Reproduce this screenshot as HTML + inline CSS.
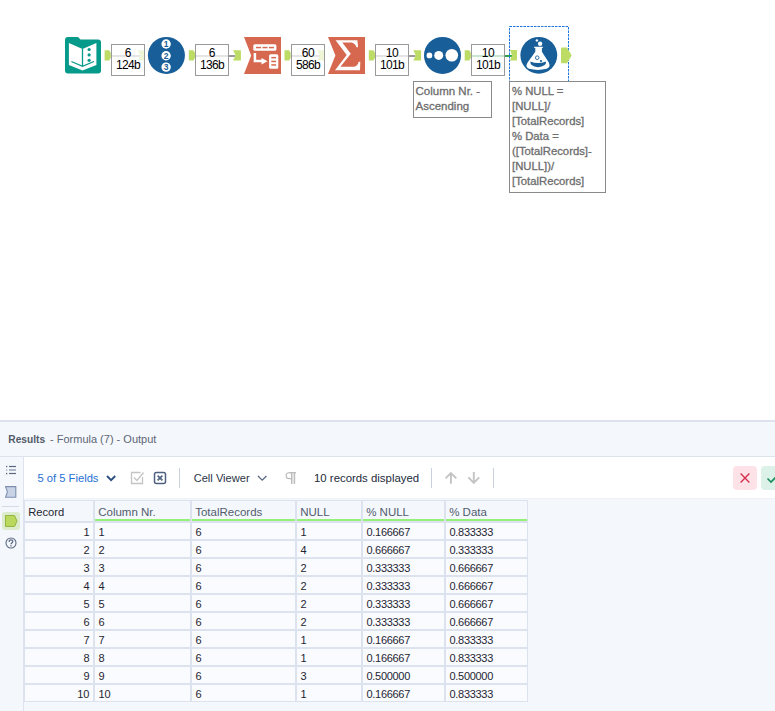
<!DOCTYPE html>
<html><head><meta charset="utf-8"><title>Results</title>
<style>
html,body{margin:0;padding:0;background:#fff;width:775px;height:711px;overflow:hidden;}
svg{display:block;position:absolute;left:0;top:0;}
text{font-family:"Liberation Sans",sans-serif;}
</style></head><body>
<svg width="775" height="711" viewBox="0 0 775 711">
<rect x="111" y="55" width="29" height="2" fill="#9b9b9b"/>
<rect x="195" y="55" width="40.5" height="2" fill="#9b9b9b"/>
<rect x="291" y="55" width="29" height="2" fill="#9b9b9b"/>
<rect x="375" y="55" width="40.5" height="2" fill="#9b9b9b"/>
<rect x="471" y="55" width="41" height="2" fill="#2fa24a"/>
<path d="M65,40 Q65,37 68,37 H78 L80.5,39.5 H98 Q101,39.5 101,42.5 V70.5 Q101,73.5 98,73.5 H68 Q65,73.5 65,70.5 Z" fill="#069a8a"/>
<path d="M68.9,42.9 L82.5,48.9 L96.4,42.9 V65 L82.5,70.6 L68.9,65 Z" fill="#fff"/>
<path d="M82.5,48.9 V66.2" stroke="#069a8a" stroke-width="1.3"/>
<path d="M71.4,61.5 L82.5,66.4 L93.9,61.5" stroke="#069a8a" stroke-width="1.3" fill="none"/>
<circle cx="89.1" cy="49.5" r="1.6" fill="#069a8a"/>
<circle cx="89.1" cy="54.9" r="1.6" fill="#069a8a"/>
<circle cx="89.1" cy="60.3" r="1.6" fill="#069a8a"/>
<path d="M104.6,50.2 H109.2 L110.8,53.0 V57.800000000000004 L109.2,60.6 H104.6 Z" fill="#bddc65" opacity="1.0"/>
<circle cx="166.4" cy="55.4" r="18.5" fill="#185e98"/>
<circle cx="166.1" cy="44.0" r="4.7" fill="#fff"/>
<text x="166.1" y="47.0" font-family="Liberation Sans" font-size="8.5" font-weight="bold" text-anchor="middle" fill="#185e98">1</text>
<circle cx="166.1" cy="55.7" r="4.7" fill="#fff"/>
<text x="166.1" y="58.7" font-family="Liberation Sans" font-size="8.5" font-weight="bold" text-anchor="middle" fill="#185e98">2</text>
<circle cx="166.1" cy="67.1" r="4.7" fill="#fff"/>
<text x="166.1" y="70.1" font-family="Liberation Sans" font-size="8.5" font-weight="bold" text-anchor="middle" fill="#185e98">3</text>
<path d="M137.7,50.2 H144.7 V60.6 H137.7 L140.2,55.400000000000006 Z" fill="#bddc65" opacity="1.0"/>
<path d="M188.8,50.2 H193.4 L195.0,53.0 V57.800000000000004 L193.4,60.6 H188.8 Z" fill="#bddc65" opacity="1.0"/>
<path d="M244,37 H281 V74 H244 L251.2,55.5 Z" fill="#d6684f"/>
<rect x="253.3" y="44.3" width="23.1" height="6.4" rx="1.5" fill="#fff"/>
<rect x="256" y="46.8" width="5" height="1.5" fill="#d6684f"/>
<rect x="262.5" y="46.8" width="5" height="1.5" fill="#d6684f"/>
<rect x="269" y="46.8" width="5" height="1.5" fill="#d6684f"/>
<path d="M254.9,52.9 V61.1 H262.5" stroke="#fff" stroke-width="2.5" fill="none"/>
<path d="M261.5,57.9 L267.5,61.2 L261.5,64.6 Z" fill="#fff"/>
<rect x="269.1" y="54.2" width="9.2" height="14.5" rx="1.5" fill="#fff"/>
<rect x="271.3" y="56.9" width="4.8" height="1.5" fill="#d6684f"/>
<rect x="271.3" y="60.7" width="4.8" height="1.5" fill="#d6684f"/>
<rect x="271.3" y="64.2" width="4.8" height="1.5" fill="#d6684f"/>
<path d="M233.1,50.2 H240.9 V60.6 H233.1 L235.6,55.400000000000006 Z" fill="#bddc65" opacity="1.0"/>
<path d="M284.5,50.2 H289.09999999999997 L290.7,53.0 V57.800000000000004 L289.09999999999997,60.6 H284.5 Z" fill="#bddc65" opacity="1.0"/>
<path d="M328,37 H365 V74 H328 L335.4,55.5 Z" fill="#d6684f"/>
<path d="M335.6,40.2 L357.4,40.2 L358.1,47.2 L356.5,47.2 Q355.5,43.6 351.7,42.4 L342.3,42.4 L350.8,53.8 L340.4,66.7 L354.0,66.7 Q357.6,66 358.7,61.7 L360.3,61.7 L360.0,70.3 L335.0,70.3 L346.7,54.9 Z" fill="#fff"/>
<path d="M317.4,50.2 H324.4 V60.6 H317.4 L319.9,55.400000000000006 Z" fill="#bddc65" opacity="1.0"/>
<path d="M368.8,50.2 H373.4 L375.0,53.0 V57.800000000000004 L373.4,60.6 H368.8 Z" fill="#bddc65" opacity="1.0"/>
<circle cx="442.5" cy="55.4" r="18.5" fill="#185e98"/>
<circle cx="429.4" cy="55.4" r="2.85" fill="#fff"/>
<circle cx="438.7" cy="55.4" r="4.5" fill="#fff"/>
<circle cx="451.8" cy="55.2" r="6.3" fill="#fff"/>
<path d="M413.3,50.2 H421.1 V60.6 H413.3 L415.8,55.400000000000006 Z" fill="#bddc65" opacity="1.0"/>
<path d="M464.7,50.2 H469.29999999999995 L470.9,53.0 V57.800000000000004 L469.29999999999995,60.6 H464.7 Z" fill="#bddc65" opacity="1.0"/>
<rect x="111.5" y="44.5" width="33" height="31" fill="#ffffff" fill-opacity="0.74" stroke="#9a9a9a" stroke-width="1"/>
<text x="128" y="57" font-family="Liberation Sans" font-size="12" text-anchor="middle" fill="#000" letter-spacing="-0.4">6</text>
<text x="128" y="69" font-family="Liberation Sans" font-size="12" text-anchor="middle" fill="#000" letter-spacing="-0.7">124b</text>
<rect x="195.5" y="44.5" width="33" height="31" fill="#ffffff" fill-opacity="0.74" stroke="#9a9a9a" stroke-width="1"/>
<text x="212" y="57" font-family="Liberation Sans" font-size="12" text-anchor="middle" fill="#000" letter-spacing="-0.4">6</text>
<text x="212" y="69" font-family="Liberation Sans" font-size="12" text-anchor="middle" fill="#000" letter-spacing="-0.7">136b</text>
<rect x="291.5" y="44.5" width="33" height="31" fill="#ffffff" fill-opacity="0.74" stroke="#9a9a9a" stroke-width="1"/>
<text x="308" y="57" font-family="Liberation Sans" font-size="12" text-anchor="middle" fill="#000" letter-spacing="-0.4">60</text>
<text x="308" y="69" font-family="Liberation Sans" font-size="12" text-anchor="middle" fill="#000" letter-spacing="-0.7">586b</text>
<rect x="375.5" y="44.5" width="33" height="31" fill="#ffffff" fill-opacity="0.74" stroke="#9a9a9a" stroke-width="1"/>
<text x="392" y="57" font-family="Liberation Sans" font-size="12" text-anchor="middle" fill="#000" letter-spacing="-0.4">10</text>
<text x="392" y="69" font-family="Liberation Sans" font-size="12" text-anchor="middle" fill="#000" letter-spacing="-0.7">101b</text>
<rect x="471.5" y="44.5" width="33" height="31" fill="#ffffff" fill-opacity="0.74" stroke="#9a9a9a" stroke-width="1"/>
<text x="488" y="57" font-family="Liberation Sans" font-size="12" text-anchor="middle" fill="#000" letter-spacing="-0.4">10</text>
<text x="488" y="69" font-family="Liberation Sans" font-size="12" text-anchor="middle" fill="#000" letter-spacing="-0.7">101b</text>
<circle cx="538.8" cy="55.3" r="18.4" fill="#185e98"/>
<path d="M534.2,46.7 H542.8 V48 H541.9 V51.8 L548.8,62.6 Q551,67.6 546.6,68.8 Q537.8,71 529,68.8 Q524.8,67.6 527.6,62.6 L535.3,51.8 V48 H534.2 Z" fill="#fff"/>
<path d="M530.3,61.4 Q537.8,64.6 546.1,61.4 Q546.4,66.2 538,67.2 Q530,66.2 530.3,61.4 Z" fill="#185e98"/>
<circle cx="537.2" cy="57.7" r="1.8" fill="none" stroke="#185e98" stroke-width="0.9"/>
<circle cx="541" cy="61.1" r="1.05" fill="#185e98"/>
<circle cx="536.9" cy="40.4" r="1.2" fill="#fff"/>
<circle cx="540.1" cy="43.8" r="2.2" fill="#fff"/>
<rect x="509.5" y="26.5" width="59" height="55" fill="none" stroke="#1c78e0" stroke-width="1" stroke-dasharray="2.5,1"/>
<path d="M510,50 H517 V60.6 H510 L512,55.3 Z" fill="#bddc65" opacity="1.0"/>
<path d="M561,48.5 Q561,47.4 562,47.4 H567 L571.7,55.4 L567,63.3 H562 Q561,63.3 561,62.3 Z" fill="#bddc65"/>
<rect x="413.5" y="81.5" width="78" height="36" fill="#fff" stroke="#8a8a8a"/>
<text x="415.5" y="95" font-family="Liberation Sans" font-size="11.5" fill="#6d6d6d" stroke="#6d6d6d" stroke-width="0.3">Column Nr. -</text>
<text x="415.5" y="109.5" font-family="Liberation Sans" font-size="11.5" fill="#6d6d6d" stroke="#6d6d6d" stroke-width="0.3">Ascending</text>
<rect x="509.5" y="81.5" width="96" height="111" fill="#fff" stroke="#8a8a8a"/>
<text x="512" y="94.8" font-family="Liberation Sans" font-size="11.3" fill="#6d6d6d" stroke="#6d6d6d" stroke-width="0.3">% NULL =</text>
<text x="512" y="109.8" font-family="Liberation Sans" font-size="11.3" fill="#6d6d6d" stroke="#6d6d6d" stroke-width="0.3">[NULL]/</text>
<text x="512" y="124.9" font-family="Liberation Sans" font-size="11.3" fill="#6d6d6d" stroke="#6d6d6d" stroke-width="0.3">[TotalRecords]</text>
<text x="512" y="139.9" font-family="Liberation Sans" font-size="11.3" fill="#6d6d6d" stroke="#6d6d6d" stroke-width="0.3">% Data =</text>
<text x="512" y="155.0" font-family="Liberation Sans" font-size="11.3" fill="#6d6d6d" stroke="#6d6d6d" stroke-width="0.3">([TotalRecords]-</text>
<text x="512" y="170.1" font-family="Liberation Sans" font-size="11.3" fill="#6d6d6d" stroke="#6d6d6d" stroke-width="0.3">[NULL])/</text>
<text x="512" y="185.1" font-family="Liberation Sans" font-size="11.3" fill="#6d6d6d" stroke="#6d6d6d" stroke-width="0.3">[TotalRecords]</text>
<rect x="0" y="420" width="775" height="2" fill="#dde3ed"/>
<rect x="0" y="422" width="775" height="289" fill="#f4f7fb"/>
<rect x="0" y="456" width="775" height="1" fill="#dde3ed"/>
<text x="8.3" y="443" font-family="Liberation Sans" font-size="10.2" font-weight="bold" fill="#535b6a">Results</text>
<text x="50" y="443" font-family="Liberation Sans" font-size="11" fill="#5d6677">- Formula (7) - Output</text>
<rect x="23" y="457" width="1" height="254" fill="#dde3ed"/>
<rect x="24" y="457" width="751" height="41" fill="#fff"/>
<rect x="30" y="498" width="745" height="1" fill="#f0f1f4"/>
<text x="37.5" y="482" font-family="Liberation Sans" font-size="11.2" fill="#1f6fd4">5 of 5 Fields</text>
<path d="M107,476 L111.1,480.2 L115.2,476" stroke="#2a4c7e" stroke-width="1.8" fill="none"/>
<path d="M140.5,472.5 H131.5 V483.5 H142.5 V477" stroke="#c4c4c4" stroke-width="1.3" fill="none"/>
<path d="M134,477.5 L137,480.5 L143.5,472.5" stroke="#c4c4c4" stroke-width="1.3" fill="none"/>
<rect x="154.5" y="472.5" width="11" height="11" rx="2" stroke="#4f6180" stroke-width="1.5" fill="none"/>
<path d="M157.6,475.6 L162.4,480.4 M162.4,475.6 L157.6,480.4" stroke="#4f6180" stroke-width="1.6"/>
<rect x="179" y="468" width="1" height="20" fill="#c9d1dd"/>
<text x="193.7" y="482" font-family="Liberation Sans" font-size="11.1" fill="#2a3446">Cell Viewer</text>
<path d="M258,476 L262.2,480.2 L266.4,476" stroke="#5b6a82" stroke-width="1.3" fill="none"/>
<rect x="292.1" y="473" width="2" height="11" fill="#e2e2e2"/>
<path d="M291.6,472.7 H289 Q286.1,472.7 286.1,475.7 Q286.1,478.6 289,478.6 H291.6" stroke="#bababa" stroke-width="1.1" fill="none"/>
<rect x="289" y="472.1" width="7" height="1.1" fill="#bababa"/>
<rect x="291" y="472.1" width="1.1" height="11.8" fill="#bababa"/>
<rect x="294.1" y="472.1" width="1.1" height="11.8" fill="#bababa"/>
<text x="314" y="482" font-family="Liberation Sans" font-size="11.4" fill="#222a3a">10 records displayed</text>
<rect x="431" y="468" width="1" height="20" fill="#c9d1dd"/>
<path d="M450.9,483.8 V473.2 M445.5,478.4 L450.9,473 L456.3,478.4" stroke="#c4c4c4" stroke-width="1.9" fill="none"/>
<path d="M473.8,472 V482.6 M468.4,477.4 L473.8,482.8 L479.2,477.4" stroke="#c4c4c4" stroke-width="1.9" fill="none"/>
<rect x="493" y="468" width="1" height="20" fill="#c9d1dd"/>
<rect x="733" y="466" width="24" height="24" rx="4" fill="#fde3e8"/>
<path d="M740.6,473.6 L749.4,482.4 M749.4,473.6 L740.6,482.4" stroke="#d3304d" stroke-width="1.35"/>
<rect x="761" y="466" width="24" height="24" rx="4" fill="#dcf1e8"/>
<path d="M767.5,478.5 L771,482 L777,476" stroke="#1a8a5b" stroke-width="1.6" fill="none"/>
<rect x="6" y="465.9" width="1.3" height="1.3" fill="#5b6a82"/>
<rect x="9" y="465.9" width="7" height="1.2" fill="#5b6a82"/>
<rect x="6" y="469.4" width="1.3" height="1.3" fill="#9ea8b9"/>
<rect x="9" y="469.2" width="7" height="1.6" fill="#9ea8b9"/>
<rect x="6" y="472.9" width="1.3" height="1.3" fill="#5b6a82"/>
<rect x="9" y="472.9" width="7" height="1.2" fill="#5b6a82"/>
<path d="M5.6,486.6 H15.8 V497.2 H5.6 L7.4,491.9 Z" fill="#c9d3e6" stroke="#7d8fb0" stroke-width="1.1"/>
<rect x="2" y="506" width="17" height="1" fill="#d4dbe6"/>
<rect x="2" y="512" width="18" height="18" rx="3" fill="#dcebcb"/>
<path d="M5.5,515.5 H14.5 L17,521 L14.5,526.5 H5.5 Z" fill="#b9d85d" stroke="#93b541" stroke-width="1"/>
<circle cx="11" cy="543" r="5" fill="none" stroke="#5b6a82" stroke-width="1.1"/>
<path d="M9.2,541.9 Q9.2,539.9 11,539.9 Q12.8,539.9 12.8,541.6 Q12.8,542.6 11.6,543.1 Q11,543.4 11,544.3" stroke="#5b6a82" stroke-width="1.25" fill="none"/>
<circle cx="11" cy="545.7" r="0.75" fill="#5b6a82"/>
<rect x="24" y="500" width="504" height="202" fill="#dce2ee"/>
<rect x="25" y="501" width="68" height="20" fill="#f4f7fc"/>
<rect x="25" y="523" width="68" height="16" fill="#fafbfe"/>
<rect x="25" y="541" width="68" height="16" fill="#fafbfe"/>
<rect x="25" y="559" width="68" height="16" fill="#fafbfe"/>
<rect x="25" y="577" width="68" height="16" fill="#fafbfe"/>
<rect x="25" y="595" width="68" height="16" fill="#fafbfe"/>
<rect x="25" y="613" width="68" height="16" fill="#fafbfe"/>
<rect x="25" y="631" width="68" height="16" fill="#fafbfe"/>
<rect x="25" y="649" width="68" height="16" fill="#fafbfe"/>
<rect x="25" y="667" width="68" height="16" fill="#fafbfe"/>
<rect x="25" y="685" width="68" height="16" fill="#fafbfe"/>
<rect x="95" y="501" width="95" height="20" fill="#f4f7fc"/>
<rect x="95" y="519" width="95" height="2" fill="#95f077"/>
<rect x="95" y="523" width="95" height="16" fill="#fafbfe"/>
<rect x="95" y="541" width="95" height="16" fill="#fafbfe"/>
<rect x="95" y="559" width="95" height="16" fill="#fafbfe"/>
<rect x="95" y="577" width="95" height="16" fill="#fafbfe"/>
<rect x="95" y="595" width="95" height="16" fill="#fafbfe"/>
<rect x="95" y="613" width="95" height="16" fill="#fafbfe"/>
<rect x="95" y="631" width="95" height="16" fill="#fafbfe"/>
<rect x="95" y="649" width="95" height="16" fill="#fafbfe"/>
<rect x="95" y="667" width="95" height="16" fill="#fafbfe"/>
<rect x="95" y="685" width="95" height="16" fill="#fafbfe"/>
<rect x="192" y="501" width="103" height="20" fill="#f4f7fc"/>
<rect x="192" y="519" width="103" height="2" fill="#95f077"/>
<rect x="192" y="523" width="103" height="16" fill="#fafbfe"/>
<rect x="192" y="541" width="103" height="16" fill="#fafbfe"/>
<rect x="192" y="559" width="103" height="16" fill="#fafbfe"/>
<rect x="192" y="577" width="103" height="16" fill="#fafbfe"/>
<rect x="192" y="595" width="103" height="16" fill="#fafbfe"/>
<rect x="192" y="613" width="103" height="16" fill="#fafbfe"/>
<rect x="192" y="631" width="103" height="16" fill="#fafbfe"/>
<rect x="192" y="649" width="103" height="16" fill="#fafbfe"/>
<rect x="192" y="667" width="103" height="16" fill="#fafbfe"/>
<rect x="192" y="685" width="103" height="16" fill="#fafbfe"/>
<rect x="297" y="501" width="64" height="20" fill="#f4f7fc"/>
<rect x="297" y="519" width="64" height="2" fill="#95f077"/>
<rect x="297" y="523" width="64" height="16" fill="#fafbfe"/>
<rect x="297" y="541" width="64" height="16" fill="#fafbfe"/>
<rect x="297" y="559" width="64" height="16" fill="#fafbfe"/>
<rect x="297" y="577" width="64" height="16" fill="#fafbfe"/>
<rect x="297" y="595" width="64" height="16" fill="#fafbfe"/>
<rect x="297" y="613" width="64" height="16" fill="#fafbfe"/>
<rect x="297" y="631" width="64" height="16" fill="#fafbfe"/>
<rect x="297" y="649" width="64" height="16" fill="#fafbfe"/>
<rect x="297" y="667" width="64" height="16" fill="#fafbfe"/>
<rect x="297" y="685" width="64" height="16" fill="#fafbfe"/>
<rect x="363" y="501" width="81" height="20" fill="#f4f7fc"/>
<rect x="363" y="519" width="81" height="2" fill="#95f077"/>
<rect x="363" y="523" width="81" height="16" fill="#fafbfe"/>
<rect x="363" y="541" width="81" height="16" fill="#fafbfe"/>
<rect x="363" y="559" width="81" height="16" fill="#fafbfe"/>
<rect x="363" y="577" width="81" height="16" fill="#fafbfe"/>
<rect x="363" y="595" width="81" height="16" fill="#fafbfe"/>
<rect x="363" y="613" width="81" height="16" fill="#fafbfe"/>
<rect x="363" y="631" width="81" height="16" fill="#fafbfe"/>
<rect x="363" y="649" width="81" height="16" fill="#fafbfe"/>
<rect x="363" y="667" width="81" height="16" fill="#fafbfe"/>
<rect x="363" y="685" width="81" height="16" fill="#fafbfe"/>
<rect x="446" y="501" width="81" height="20" fill="#f4f7fc"/>
<rect x="446" y="519" width="81" height="2" fill="#95f077"/>
<rect x="446" y="523" width="81" height="16" fill="#fafbfe"/>
<rect x="446" y="541" width="81" height="16" fill="#fafbfe"/>
<rect x="446" y="559" width="81" height="16" fill="#fafbfe"/>
<rect x="446" y="577" width="81" height="16" fill="#fafbfe"/>
<rect x="446" y="595" width="81" height="16" fill="#fafbfe"/>
<rect x="446" y="613" width="81" height="16" fill="#fafbfe"/>
<rect x="446" y="631" width="81" height="16" fill="#fafbfe"/>
<rect x="446" y="649" width="81" height="16" fill="#fafbfe"/>
<rect x="446" y="667" width="81" height="16" fill="#fafbfe"/>
<rect x="446" y="685" width="81" height="16" fill="#fafbfe"/>
<text x="28.2" y="515.5" font-family="Liberation Sans" font-size="11.2" fill="#1f2633">Record</text>
<text x="98.2" y="515.5" font-family="Liberation Sans" font-size="11.5" fill="#525c6e">Column Nr.</text>
<text x="195.2" y="515.5" font-family="Liberation Sans" font-size="11.5" fill="#525c6e">TotalRecords</text>
<text x="300.2" y="515.5" font-family="Liberation Sans" font-size="11.5" fill="#525c6e">NULL</text>
<text x="366.2" y="515.5" font-family="Liberation Sans" font-size="11.5" fill="#525c6e">% NULL</text>
<text x="449.2" y="515.5" font-family="Liberation Sans" font-size="11.5" fill="#525c6e">% Data</text>
<text x="89.5" y="536" font-family="Liberation Sans" font-size="11" text-anchor="end" fill="#1f2633">1</text>
<text x="98.5" y="536" font-family="Liberation Sans" font-size="11" fill="#1f2633">1</text>
<text x="195.5" y="536" font-family="Liberation Sans" font-size="11" fill="#1f2633">6</text>
<text x="300.5" y="536" font-family="Liberation Sans" font-size="11" fill="#1f2633">1</text>
<text x="366.5" y="536" font-family="Liberation Sans" font-size="11" letter-spacing="-0.3" fill="#1f2633">0.166667</text>
<text x="449.5" y="536" font-family="Liberation Sans" font-size="11" letter-spacing="-0.3" fill="#1f2633">0.833333</text>
<text x="89.5" y="554" font-family="Liberation Sans" font-size="11" text-anchor="end" fill="#1f2633">2</text>
<text x="98.5" y="554" font-family="Liberation Sans" font-size="11" fill="#1f2633">2</text>
<text x="195.5" y="554" font-family="Liberation Sans" font-size="11" fill="#1f2633">6</text>
<text x="300.5" y="554" font-family="Liberation Sans" font-size="11" fill="#1f2633">4</text>
<text x="366.5" y="554" font-family="Liberation Sans" font-size="11" letter-spacing="-0.3" fill="#1f2633">0.666667</text>
<text x="449.5" y="554" font-family="Liberation Sans" font-size="11" letter-spacing="-0.3" fill="#1f2633">0.333333</text>
<text x="89.5" y="572" font-family="Liberation Sans" font-size="11" text-anchor="end" fill="#1f2633">3</text>
<text x="98.5" y="572" font-family="Liberation Sans" font-size="11" fill="#1f2633">3</text>
<text x="195.5" y="572" font-family="Liberation Sans" font-size="11" fill="#1f2633">6</text>
<text x="300.5" y="572" font-family="Liberation Sans" font-size="11" fill="#1f2633">2</text>
<text x="366.5" y="572" font-family="Liberation Sans" font-size="11" letter-spacing="-0.3" fill="#1f2633">0.333333</text>
<text x="449.5" y="572" font-family="Liberation Sans" font-size="11" letter-spacing="-0.3" fill="#1f2633">0.666667</text>
<text x="89.5" y="590" font-family="Liberation Sans" font-size="11" text-anchor="end" fill="#1f2633">4</text>
<text x="98.5" y="590" font-family="Liberation Sans" font-size="11" fill="#1f2633">4</text>
<text x="195.5" y="590" font-family="Liberation Sans" font-size="11" fill="#1f2633">6</text>
<text x="300.5" y="590" font-family="Liberation Sans" font-size="11" fill="#1f2633">2</text>
<text x="366.5" y="590" font-family="Liberation Sans" font-size="11" letter-spacing="-0.3" fill="#1f2633">0.333333</text>
<text x="449.5" y="590" font-family="Liberation Sans" font-size="11" letter-spacing="-0.3" fill="#1f2633">0.666667</text>
<text x="89.5" y="608" font-family="Liberation Sans" font-size="11" text-anchor="end" fill="#1f2633">5</text>
<text x="98.5" y="608" font-family="Liberation Sans" font-size="11" fill="#1f2633">5</text>
<text x="195.5" y="608" font-family="Liberation Sans" font-size="11" fill="#1f2633">6</text>
<text x="300.5" y="608" font-family="Liberation Sans" font-size="11" fill="#1f2633">2</text>
<text x="366.5" y="608" font-family="Liberation Sans" font-size="11" letter-spacing="-0.3" fill="#1f2633">0.333333</text>
<text x="449.5" y="608" font-family="Liberation Sans" font-size="11" letter-spacing="-0.3" fill="#1f2633">0.666667</text>
<text x="89.5" y="626" font-family="Liberation Sans" font-size="11" text-anchor="end" fill="#1f2633">6</text>
<text x="98.5" y="626" font-family="Liberation Sans" font-size="11" fill="#1f2633">6</text>
<text x="195.5" y="626" font-family="Liberation Sans" font-size="11" fill="#1f2633">6</text>
<text x="300.5" y="626" font-family="Liberation Sans" font-size="11" fill="#1f2633">2</text>
<text x="366.5" y="626" font-family="Liberation Sans" font-size="11" letter-spacing="-0.3" fill="#1f2633">0.333333</text>
<text x="449.5" y="626" font-family="Liberation Sans" font-size="11" letter-spacing="-0.3" fill="#1f2633">0.666667</text>
<text x="89.5" y="644" font-family="Liberation Sans" font-size="11" text-anchor="end" fill="#1f2633">7</text>
<text x="98.5" y="644" font-family="Liberation Sans" font-size="11" fill="#1f2633">7</text>
<text x="195.5" y="644" font-family="Liberation Sans" font-size="11" fill="#1f2633">6</text>
<text x="300.5" y="644" font-family="Liberation Sans" font-size="11" fill="#1f2633">1</text>
<text x="366.5" y="644" font-family="Liberation Sans" font-size="11" letter-spacing="-0.3" fill="#1f2633">0.166667</text>
<text x="449.5" y="644" font-family="Liberation Sans" font-size="11" letter-spacing="-0.3" fill="#1f2633">0.833333</text>
<text x="89.5" y="662" font-family="Liberation Sans" font-size="11" text-anchor="end" fill="#1f2633">8</text>
<text x="98.5" y="662" font-family="Liberation Sans" font-size="11" fill="#1f2633">8</text>
<text x="195.5" y="662" font-family="Liberation Sans" font-size="11" fill="#1f2633">6</text>
<text x="300.5" y="662" font-family="Liberation Sans" font-size="11" fill="#1f2633">1</text>
<text x="366.5" y="662" font-family="Liberation Sans" font-size="11" letter-spacing="-0.3" fill="#1f2633">0.166667</text>
<text x="449.5" y="662" font-family="Liberation Sans" font-size="11" letter-spacing="-0.3" fill="#1f2633">0.833333</text>
<text x="89.5" y="680" font-family="Liberation Sans" font-size="11" text-anchor="end" fill="#1f2633">9</text>
<text x="98.5" y="680" font-family="Liberation Sans" font-size="11" fill="#1f2633">9</text>
<text x="195.5" y="680" font-family="Liberation Sans" font-size="11" fill="#1f2633">6</text>
<text x="300.5" y="680" font-family="Liberation Sans" font-size="11" fill="#1f2633">3</text>
<text x="366.5" y="680" font-family="Liberation Sans" font-size="11" letter-spacing="-0.3" fill="#1f2633">0.500000</text>
<text x="449.5" y="680" font-family="Liberation Sans" font-size="11" letter-spacing="-0.3" fill="#1f2633">0.500000</text>
<text x="89.5" y="698" font-family="Liberation Sans" font-size="11" text-anchor="end" fill="#1f2633">10</text>
<text x="98.5" y="698" font-family="Liberation Sans" font-size="11" fill="#1f2633">10</text>
<text x="195.5" y="698" font-family="Liberation Sans" font-size="11" fill="#1f2633">6</text>
<text x="300.5" y="698" font-family="Liberation Sans" font-size="11" fill="#1f2633">1</text>
<text x="366.5" y="698" font-family="Liberation Sans" font-size="11" letter-spacing="-0.3" fill="#1f2633">0.166667</text>
<text x="449.5" y="698" font-family="Liberation Sans" font-size="11" letter-spacing="-0.3" fill="#1f2633">0.833333</text>
</svg>
</body></html>
